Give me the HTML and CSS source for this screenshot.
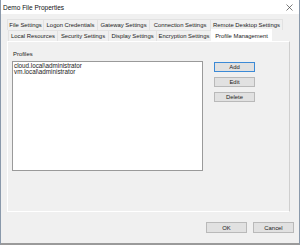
FILE: index.html
```html
<!DOCTYPE html>
<html>
<head>
<meta charset="utf-8">
<link rel="stylesheet" href="styles.css">
</head>
<body>
<div class="win">
  <div class="titlebar">
    <span class="title">Demo File Properties</span>
    <svg class="close" width="7" height="7" viewBox="0 0 7 7"><path d="M0.5 0.5L6.5 6.5M6.5 0.5L0.5 6.5" stroke="#444" stroke-width="0.7" fill="none"/></svg>
  </div>
  <div class="body">
    <div class="tabs">
      <div class="tabrow r1">
        <div class="tab w1">File Settings</div>
        <div class="tab w2">Logon Credentials</div>
        <div class="tab w3">Gateway Settings</div>
        <div class="tab w4">Connection Settings</div>
        <div class="tab w5">Remote Desktop Settings</div>
      </div>
      <div class="tabrow r2">
        <div class="tab v1">Local Resources</div>
        <div class="tab v2">Security Settings</div>
        <div class="tab v3">Display Settings</div>
        <div class="tab v4">Encryption Settings</div>
        <div class="tab sel">Profile Management</div>
      </div>
    </div>
    <div class="panel">
      <div class="label">Profiles</div>
      <div class="content">
        <div class="list">
          <div class="item">cloud.local\administrator</div>
          <div class="item">vm.local\administrator</div>
        </div>
        <div class="side">
          <div class="btn focus">Add</div>
          <div class="btn">Edit</div>
          <div class="btn">Delete</div>
        </div>
      </div>
    </div>
    <div class="footer">
      <div class="btn">OK</div>
      <div class="btn">Cancel</div>
    </div>
  </div>
</div>
</body>
</html>
```
FILE: styles.css
```css
html, body {
  margin: 0;
  padding: 0;
  background: #f0f0f0;
}
.win {
  width: 300px;
  height: 245px;
  box-sizing: border-box;
  border-left: 1px solid #8a99ab;
  border-right: 1px solid #8a99ab;
  border-bottom: 2px solid #9a9a9a;
  background: #f0f0f0;
  font-family: "Liberation Sans", Arial, sans-serif;
  color: #222;
  display: flex;
  flex-direction: column;
}
.titlebar {
  height: 14px;
  background: #fff;
  display: flex;
  align-items: center;
  justify-content: space-between;
  padding: 0 6px 0 2px;
}
.title {
  font-size: 6.5px;
  color: #111;
}
.body {
  flex: 1;
  display: flex;
  flex-direction: column;
  padding: 5px 5px 0 6px;
}
.tabs {
  display: flex;
  flex-direction: column;
}
.tabrow {
  display: flex;
  height: 11px;
  font-size: 5.9px;
}
.tab {
  box-sizing: border-box;
  border: 1px solid #e2e2e2;
  border-bottom: none;
  margin-right: -1px;
  display: flex;
  align-items: center;
  justify-content: center;
  white-space: nowrap;
  background: #f0f0f0;
}
.w1 { width: 37px; }
.w2 { width: 55px; }
.w3 { width: 53px; }
.w4 { width: 62px; }
.w5 { width: 73px; }
.r2 { padding-left: 1px; }
.v1 { width: 50px; }
.v2 { width: 52px; }
.v3 { width: 49px; }
.v4 { width: 56px; }
.sel {
  width: 61px;
  background: #fff;
  border-color: #fff;
  height: 12px;
  margin-top: -1px;
  position: relative;
  z-index: 1;
}
.panel {
  height: 171px;
  box-sizing: border-box;
  border: 1px solid #fff;
  border-right-color: #cfcfcf;
  margin-right: 4px;
  padding: 9px 4px 0 4px;
  display: flex;
  flex-direction: column;
}
.label {
  font-size: 5.9px;
  height: 10px;
  padding-left: 1px;
}
.content {
  display: flex;
  gap: 11px;
}
.list {
  width: 191px;
  height: 110px;
  box-sizing: border-box;
  background: #fff;
  border: 1px solid #9a9a9a;
  padding: 1px 1px;
  font-size: 6.3px;
  line-height: 6px;
}
.side {
  display: flex;
  flex-direction: column;
  gap: 5px;
  padding-top: 1px;
}
.btn {
  width: 41px;
  height: 10px;
  box-sizing: border-box;
  background: #e1e1e1;
  border: 1px solid #b9b9b9;
  font-size: 5.9px;
  display: flex;
  align-items: center;
  justify-content: center;
}
.btn.focus {
  border-color: #3c8ad6;
}
.footer {
  display: flex;
  justify-content: flex-end;
  gap: 6px;
  padding-top: 10px;
}
.footer .btn {
  height: 11px;
}
```
